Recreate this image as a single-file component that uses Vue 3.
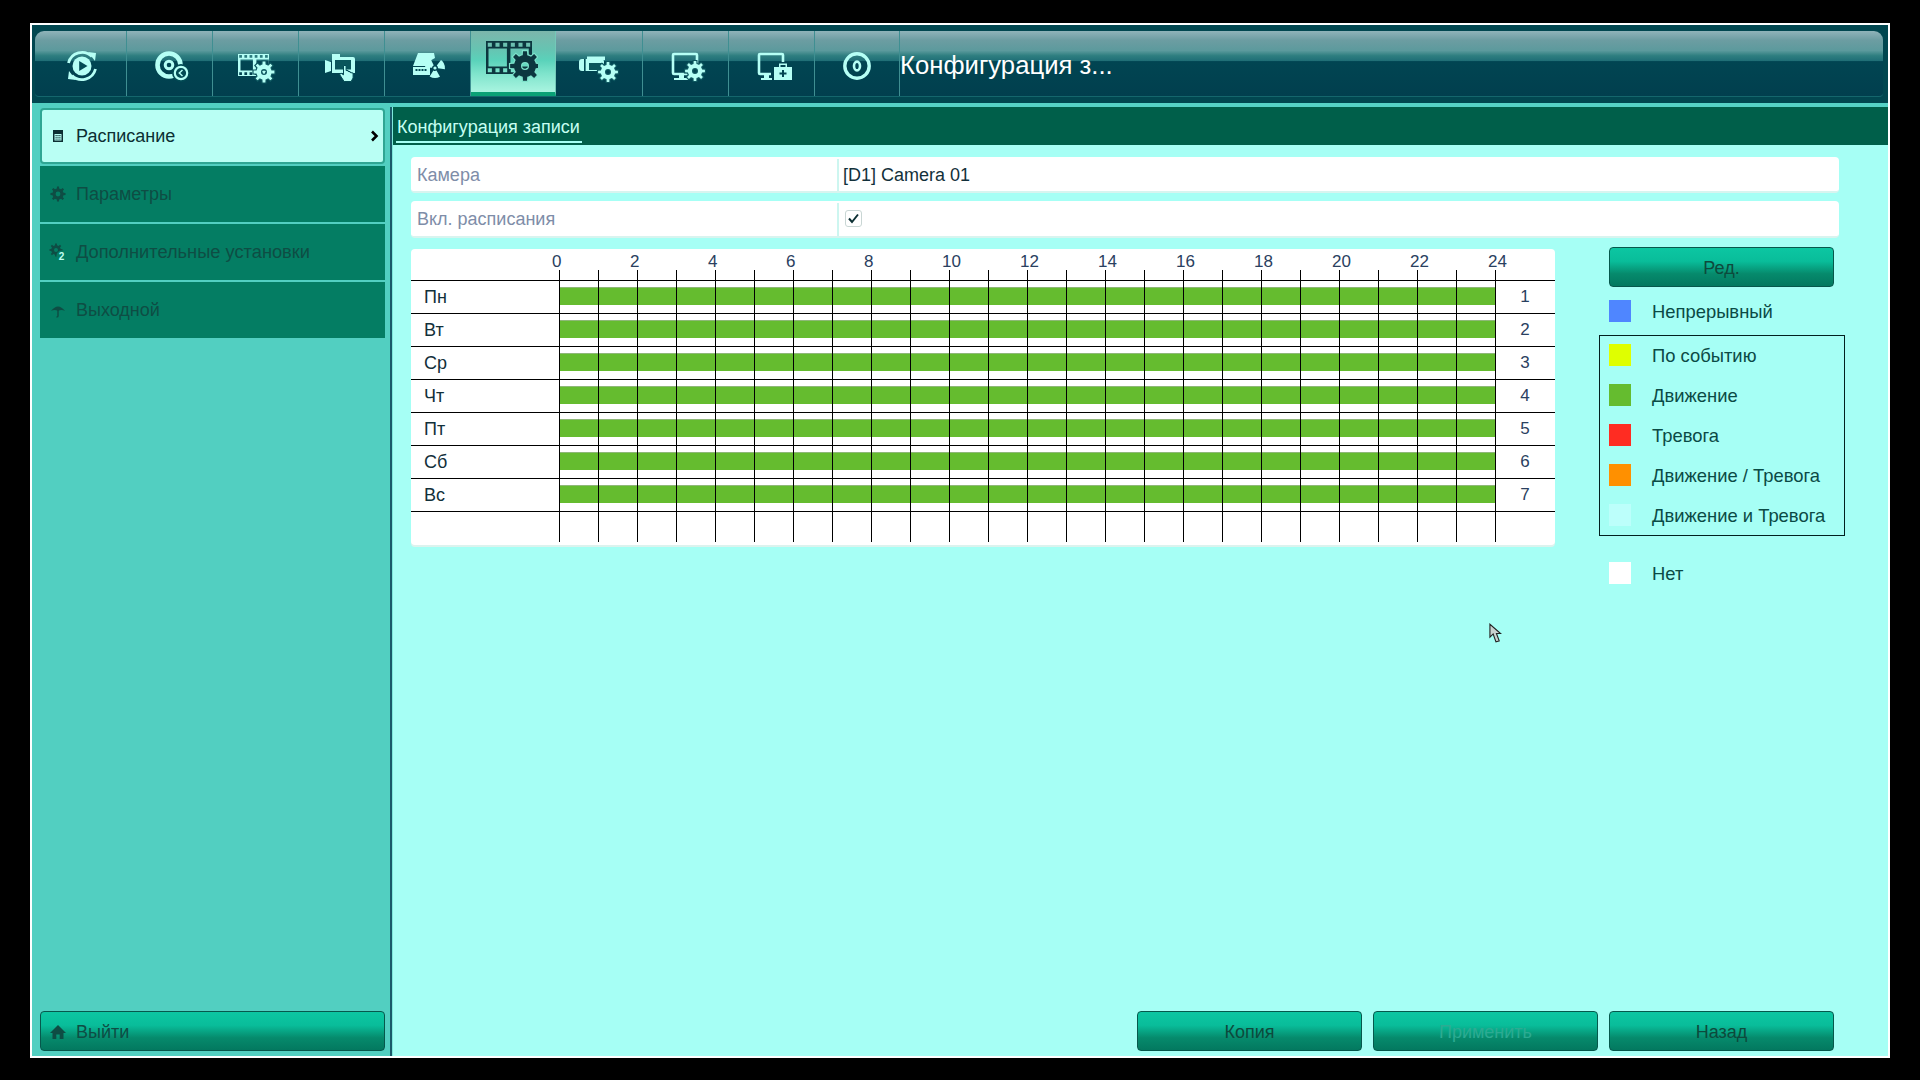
<script setup>
const days = [
  { name: 'Пн', num: 1 },
  { name: 'Вт', num: 2 },
  { name: 'Ср', num: 3 },
  { name: 'Чт', num: 4 },
  { name: 'Пт', num: 5 },
  { name: 'Сб', num: 6 },
  { name: 'Вс', num: 7 }
]
const hours = [0, 2, 4, 6, 8, 10, 12, 14, 16, 18, 20, 22, 24]
const lines = Array.from({ length: 25 }, (_, i) => i)

const boxed = [
  { name: 'По событию', color: '#dfff00' },
  { name: 'Движение', color: '#65bc2f' },
  { name: 'Тревога', color: '#ff2c22' },
  { name: 'Движение / Тревога', color: '#ff9000' },
  { name: 'Движение и Тревога', color: '#bcfffb' }
]

// gear outline with a round hole, used by several icons
function gear(cx, cy, R, r, hole, teeth = 8) {
  let d = ''
  const step = (Math.PI * 2) / teeth
  for (let i = 0; i < teeth; i++) {
    const a = i * step
    const w = step * 0.24
    const pts = [
      [r, a - step / 2 + w * 0.4],
      [r, a - w * 1.1],
      [R, a - w * 0.7],
      [R, a + w * 0.7],
      [r, a + w * 1.1]
    ]
    pts.forEach((p, j) => {
      const x = cx + p[0] * Math.cos(p[1])
      const y = cy + p[0] * Math.sin(p[1])
      d += (i === 0 && j === 0 ? 'M' : 'L') + x.toFixed(2) + ' ' + y.toFixed(2)
    })
  }
  d += `Z M${cx + hole} ${cy} A${hole} ${hole} 0 1 0 ${cx - hole} ${cy} A${hole} ${hole} 0 1 0 ${cx + hole} ${cy}Z`
  return d
}

// film strip with perforations and two frames cut out
function film(x, y, w, h, holes = 6) {
  const band = h * 0.2
  let d = `M${x} ${y}H${x + w}V${y + h}H${x}Z`
  const gap = w / holes
  const s = band * 0.62
  for (let i = 0; i < holes; i++) {
    const hx = x + gap * i + (gap - s) / 2
    d += `M${hx} ${y + band * 0.25}h${s}v${s}h${-s}Z`
    d += `M${hx} ${y + h - band * 0.25 - s}h${s}v${s}h${-s}Z`
  }
  const top = y + band + 1
  const hgt = h - 2 * band - 2
  const fw = w * 0.4
  d += `M${x + 2.5} ${top}h${fw}v${hgt}h${-fw}Z`
  d += `M${x + fw + 6} ${top}h${fw}v${hgt}h${-fw}Z`
  return d
}
</script>

<template>
  <div class="screen">
    <div class="frame">
      <header class="top">
        <div class="bar">
          <div class="tab first">
            <svg width="48" height="40" viewBox="0 0 48 40">
              <circle cx="25" cy="20" r="9.5" fill="currentColor" />
              <path d="M22.2 15 L30.5 20 L22.2 25Z" fill="#024a54" />
              <path d="M11.5 17 A14 14 0 0 1 35 10.5 M38.5 23 A14 14 0 0 1 15 29.5" fill="none" stroke="currentColor" stroke-width="2.8" />
              <path d="M31 6 L39 7 L38 15Z M19 34 L11 33 L12 25Z" fill="currentColor" />
            </svg>
          </div>
          <div class="tab">
            <svg width="48" height="40" viewBox="0 0 48 40">
              <circle cx="23" cy="19" r="11.5" fill="none" stroke="currentColor" stroke-width="4.6" />
              <circle cx="23" cy="19" r="3.8" fill="none" stroke="currentColor" stroke-width="3" />
              <circle cx="35" cy="27" r="9" fill="#024a54" />
              <circle cx="35" cy="27" r="6.2" fill="none" stroke="currentColor" stroke-width="2.2" />
              <path d="M36.5 24 L33.3 27 L36.5 30" fill="none" stroke="currentColor" stroke-width="1.5" />
            </svg>
          </div>
          <div class="tab nudge">
            <svg width="48" height="40" viewBox="0 0 48 40">
              <path :d="film(7, 8, 31, 22)" fill="currentColor" fill-rule="evenodd" />
              <path class="halo" :d="gear(33, 26, 10.5, 7.6, 3)" fill="currentColor" fill-rule="evenodd" />
            </svg>
          </div>
          <div class="tab nudge">
            <svg width="48" height="40" viewBox="0 0 48 40">
              <path d="M8 14 L14 16 V25 L8 27Z" fill="currentColor" />
              <path d="M15 8 H23 V11 H36 Q38 11 38 13 V27 H15Z" fill="currentColor" />
              <rect x="18" y="14" width="16" height="9.5" fill="#0a565c" />
              <path d="M26.5 19.5 h2.6 v5 h2 v1 h2 v1 l3 .5 v5 l-2 3.5 h-7 l-4.5 -7 l1.6 -1.2 l2.3 1.5Z" fill="currentColor" stroke="#024a54" stroke-width="1" />
            </svg>
          </div>
          <div class="tab nudge">
            <svg width="48" height="40" viewBox="0 0 48 40">
              <path d="M15 7 H31 L32 12 Q25 15 24 20 H10Z" fill="currentColor" />
              <rect x="10" y="21" width="17" height="8" fill="currentColor" />
              <path d="M12.5 24 h11" stroke="#024a54" stroke-width="2" stroke-dasharray="2 1" />
              <circle cx="32" cy="22" r="1.6" fill="currentColor" />
              <circle cx="32" cy="22" r="6.5" fill="none" stroke="currentColor" stroke-width="7" stroke-dasharray="6.8 6.8" transform="rotate(60 32 22)" />
            </svg>
          </div>
          <div class="tab on">
            <svg width="52" height="44" viewBox="0 0 52 44">
              <path :d="film(0, 1, 46, 33)" fill="currentColor" fill-rule="evenodd" />
              <path class="halo-on" :d="gear(39, 26, 15, 11, 4)" fill="currentColor" fill-rule="evenodd" />
            </svg>
          </div>
          <div class="tab after-on">
            <svg width="48" height="40" viewBox="0 0 48 40">
              <rect x="6" y="13" width="25" height="12" rx="3" fill="currentColor" />
              <rect x="11" y="13" width="1.6" height="12" fill="#024a54" />
              <rect x="14" y="10.5" width="18" height="3.6" fill="currentColor" />
              <path d="M16 17 H30 L33 24 H16Z" fill="#0a565c" />
              <path class="halo" :d="gear(35, 26, 10, 7.2, 3)" fill="currentColor" fill-rule="evenodd" />
            </svg>
          </div>
          <div class="tab">
            <svg width="48" height="40" viewBox="0 0 48 40">
              <path d="M28 28 H12 Q11 28 11 27 V9 Q11 8 12 8 H34 Q35 8 35 9 V18" fill="none" stroke="currentColor" stroke-width="2.6" />
              <path d="M17 28 H22 V32 H26 V34 H12 V32 H17Z" fill="currentColor" />
              <path class="halo" :d="gear(33, 25, 10, 7.2, 3)" fill="currentColor" fill-rule="evenodd" />
            </svg>
          </div>
          <div class="tab">
            <svg width="48" height="40" viewBox="0 0 48 40">
              <path d="M23 28 H12 Q11 28 11 27 V9 Q11 8 12 8 H34 Q35 8 35 9 V16" fill="none" stroke="currentColor" stroke-width="2.6" />
              <path d="M16 28 H21 V32 H24 V34 H13 V32 H16Z" fill="currentColor" />
              <path d="M31 21 V17.5 H39 V21 H37.5 V19 H32.5 V21Z" fill="currentColor" />
              <path d="M26 21 H44 V34 H26Z M34 24 V26.5 H31.5 V28.5 H34 V31 H36 V28.5 H38.5 V26.5 H36 V24Z" fill="currentColor" fill-rule="evenodd" />
            </svg>
          </div>
          <div class="tab last">
            <svg width="48" height="40" viewBox="0 0 48 40">
              <circle cx="24" cy="20" r="12.2" fill="none" stroke="currentColor" stroke-width="3.4" />
              <ellipse cx="24" cy="20" rx="3" ry="4.4" fill="none" stroke="currentColor" stroke-width="2.6" />
            </svg>
          </div>
          <span class="title">Конфигурация з...</span>
        </div>
      </header>

      <div class="body">
        <aside class="side">
          <div class="item active">
            <svg class="ico" width="18" height="18" viewBox="0 0 18 18">
              <path d="M4 3 H14 V15 H4Z M5.5 7 V13.5 H12.5 V7Z" fill="currentColor" fill-rule="evenodd" />
              <path d="M6.5 8.5 h5 M6.5 10.3 h5 M6.5 12.1 h5" stroke="currentColor" stroke-width="1" stroke-dasharray="1.2 .7" />
            </svg>
            <span>Расписание</span>
            <svg class="more" width="10" height="12" viewBox="0 0 10 12">
              <path d="M2 1.5 L6.5 6 L2 10.5" fill="none" stroke="#000" stroke-width="2.6" />
            </svg>
          </div>
          <div class="item">
            <svg class="ico" width="18" height="18" viewBox="0 0 18 18">
              <path :d="gear(9, 9, 7.6, 5.6, 2.4)" fill="currentColor" fill-rule="evenodd" />
            </svg>
            <span>Параметры</span>
          </div>
          <div class="item">
            <svg class="ico" width="18" height="18" viewBox="0 0 18 18">
              <path :d="gear(7, 7, 6.6, 4.8, 2)" fill="currentColor" fill-rule="evenodd" />
              <circle cx="12.5" cy="12.5" r="5" fill="#047d63" />
              <text x="12.5" y="16.5" text-anchor="middle" class="two">2</text>
            </svg>
            <span class="long">Дополнительные установки</span>
          </div>
          <div class="item">
            <svg class="ico" width="18" height="18" viewBox="0 0 18 18">
              <path d="M2 10 Q9 1 16 10 Q12.5 8 9 10 Q5.5 8 2 10Z" fill="currentColor" />
              <path d="M9 8 V15 Q9 16 7.5 16" fill="none" stroke="currentColor" stroke-width="1.5" />
            </svg>
            <span>Выходной</span>
          </div>
          <div class="item exit">
            <svg class="ico" width="18" height="18" viewBox="0 0 18 18">
              <path d="M9 2 L17 10 H14.5 V16 H10.7 V11.5 H7.3 V16 H3.5 V10 H1Z" fill="currentColor" />
            </svg>
            <span>Выйти</span>
          </div>
        </aside>

        <main class="main">
          <div class="main-head">
            <span class="main-tab">Конфигурация записи</span>
          </div>

          <div class="content">
            <div class="row r1">
              <div class="row-label">Камера</div>
              <div class="row-value">[D1] Camera 01</div>
            </div>
            <div class="row r2">
              <div class="row-label">Вкл. расписания</div>
              <div class="row-value">
                <span class="check">
                  <svg width="13" height="13" viewBox="0 0 13 13">
                    <path d="M2 6.5 L5 10 L11 2.5" fill="none" stroke="#0c2f33" stroke-width="2" />
                  </svg>
                </span>
              </div>
            </div>

            <div class="lower">
              <div class="schedule">
                <div class="hours">
                  <span v-for="h in hours" :key="h" class="hour">{{ h }}</span>
                </div>
                <div v-for="d in days" :key="d.num" class="day">
                  <span class="day-name">{{ d.name }}</span>
                  <div class="track"><div class="fill"></div></div>
                  <span class="day-num">{{ d.num }}</span>
                </div>
                <div class="day empty"></div>
                <div class="ticks">
                  <i v-for="l in lines" :key="l"></i>
                </div>
              </div>

              <div class="legend">
                <button class="btn edit">Ред.</button>
                <div class="leg out first-out">
                  <span class="sw" style="background: #4f86ff"></span>
                  <span>Непрерывный</span>
                </div>
                <div class="box">
                  <div v-for="b in boxed" :key="b.name" class="leg">
                    <span class="sw" :style="{ background: b.color }"></span>
                    <span>{{ b.name }}</span>
                  </div>
                </div>
                <div class="leg out last-out">
                  <span class="sw" style="background: #fff"></span>
                  <span>Нет</span>
                </div>
              </div>
            </div>

            <div class="actions">
              <button class="btn">Копия</button>
              <button class="btn off">Применить</button>
              <button class="btn">Назад</button>
            </div>
          </div>

          <svg class="cursor" width="13" height="21" viewBox="0 0 14 22">
            <path d="M1 1 L1 15 L4.5 11.5 L7.5 20 L11 19 L8 11 L12.5 11Z" fill="#c9d2d0" stroke="#222" stroke-width="1.2" />
          </svg>
        </main>
      </div>
    </div>
  </div>
</template>

<style>
html,
body {
  margin: 0;
  background: #000;
}
</style>

<style scoped>
.screen {
  width: 1920px;
  height: 1080px;
  box-sizing: border-box;
  padding: 23px 30px 22px 30px;
  background: #000;
  font-family: "Liberation Sans", Arial, sans-serif;
}

.frame {
  height: 100%;
  box-sizing: border-box;
  border: 2px solid #fff;
  display: flex;
  flex-direction: column;
  background: #52cfc1;
}

.top {
  height: 78px;
  box-sizing: border-box;
  padding: 6px 5px 6px 3px;
  background: #014750;
  flex: none;
}

.bar {
  height: 66px;
  box-sizing: border-box;
  display: flex;
  border-radius: 9px 9px 4px 4px;
  border-bottom: 1px solid #14666c;
  background: linear-gradient(#8fb3b9 0, #6c9da2 14%, #5c9a9d 30%, #2e7e80 38%, #1f6e76 46%, #014552 47%, #013f4e 100%);
  color: #b6fff5;
}

.tab {
  width: 86px;
  height: 65px;
  flex: none;
  box-sizing: border-box;
  padding-top: 5px;
  display: flex;
  justify-content: center;
  align-items: center;
  border-right: 1px solid #3f8f92;
}

.tab.first {
  width: 92px;
}

.tab.last {
  width: 85px;
}

.tab.nudge svg {
  margin-left: -2px;
}

.tab.on {
  width: 85px;
  color: #0c373f;
  border-right-color: #74c8b8;
  border-bottom: 4px solid #0aa176;
  padding-top: 0;
  background: linear-gradient(#7cb6ab 0, #66c4b2 30%, #5ad2ba 48%, #7fe4cc 70%, #a9f4e0 100%);
}

.tab.on svg {
  margin-left: -2px;
}

.tab.after-on {
  width: 87px;
}

.tab.after-on svg {
  margin-left: -5px;
}

.title {
  align-self: center;
  padding-top: 4px;
  color: #fff;
  font-size: 25.7px;
}

.halo {
  stroke: #0e5860;
  stroke-width: 2.4;
  paint-order: stroke;
}

.halo-on {
  stroke: #7fe2cb;
  stroke-width: 2.4;
  paint-order: stroke;
}

.body {
  flex: 1;
  display: flex;
  min-height: 0;
  padding-top: 4px;
  background: #56d2c6;
}

.side {
  width: 358px;
  flex: none;
  box-sizing: border-box;
  margin-top: -4px;
  padding: 5px 5px 5px 8px;
  background: #52cfc1;
  display: flex;
  flex-direction: column;
  gap: 2px;
}

.item {
  height: 56px;
  flex: none;
  box-sizing: border-box;
  padding-left: 9px;
  display: flex;
  align-items: center;
  background: #047d63;
  color: #0e4d44;
  font-size: 18px;
}

.item .ico {
  flex: none;
  margin-right: 9px;
}

.item span {
  white-space: nowrap;
}

.item .long {
  font-size: 18.25px;
}

.item.active {
  background: #b9fff4;
  border: 2px solid #2fa693;
  border-radius: 4px;
  padding-left: 7px;
  color: #0c2f33;
}

.more {
  margin-left: auto;
  margin-right: 3px;
}

.item.exit {
  height: 40px;
  margin-top: auto;
  border: 1px solid #06584c;
  border-radius: 4px;
  padding: 2px 0 0 8px;
  background: linear-gradient(#0cc6a2 0, #09bd9a 35%, #068a6c 68%, #03785f 100%);
}

.two {
  font-family: "Liberation Sans", Arial, sans-serif;
  font-size: 10px;
  font-weight: 700;
  fill: #c0fff2;
}

.main {
  position: relative;
  flex: 1;
  border-left: 2px solid #1a5a6a;
  box-shadow: inset 1px 0 0 #7fe8dc;
  background: #a6fff5;
  display: flex;
  flex-direction: column;
  min-width: 0;
}

.main-head {
  height: 38px;
  flex: none;
  box-sizing: border-box;
  margin-left: 1px;
  padding-left: 3px;
  background: #005f4a;
}

.main-tab {
  display: inline-block;
  box-sizing: border-box;
  height: 36px;
  width: 186px;
  padding: 10px 0 0 1px;
  border-bottom: 2px solid #a6fff5;
  color: #c6fff2;
  font-size: 18px;
  white-space: nowrap;
}

.content {
  flex: 1;
  min-height: 0;
  padding: 12px 49px 5px 19px;
  display: flex;
  flex-direction: column;
}

.row {
  height: 37px;
  box-sizing: border-box;
  flex: none;
  display: flex;
  background: #fff;
  border-radius: 4px;
  border-bottom: 2px solid #d8f4ef;
  font-size: 18px;
  padding-top: 2px;
}

.row.r1 {
  height: 36px;
  margin-bottom: 8px;
}

.row-label {
  width: 428px;
  flex: none;
  box-sizing: border-box;
  padding-left: 6px;
  display: flex;
  align-items: center;
  border-right: 2px solid #cdf6f0;
  color: #7e8da8;
}

.row-value {
  flex: 1;
  padding-left: 4px;
  display: flex;
  align-items: center;
  color: #12303a;
}

.check {
  width: 17px;
  height: 17px;
  box-sizing: border-box;
  margin-left: 2px;
  margin-top: -3px;
  border: 1px solid #c9d6d4;
  border-radius: 3px;
  display: flex;
  align-items: center;
  justify-content: center;
}

.lower {
  display: flex;
  margin-top: 11px;
  align-items: flex-start;
}

.schedule {
  position: relative;
  width: 1144px;
  height: 296px;
  flex: none;
  background: #fff;
  border-radius: 4px;
  box-shadow: 0 2px 0 #dcf3ee;
}

.hours {
  height: 31px;
  box-sizing: border-box;
  padding-left: 141px;
  display: flex;
  color: #2a4060;
  font-size: 17px;
  line-height: 25px;
}

.hour {
  width: 78px;
  flex: none;
}

.day {
  height: 33px;
  box-sizing: border-box;
  border-top: 1.4px solid #000;
  display: flex;
  align-items: flex-start;
  font-size: 18px;
  color: #12303a;
}

.day-name {
  width: 148px;
  flex: none;
  box-sizing: border-box;
  padding-left: 13px;
  line-height: 32px;
}

.track {
  width: 936px;
  flex: none;
  padding-top: 7px;
}

.fill {
  height: 17px;
  background: #65bc2f;
  box-shadow: 0 -1px 0 #8fb878;
}

.day-num {
  flex: 1;
  text-align: center;
  line-height: 32px;
  font-size: 17px;
  color: #2a4060;
}

.ticks {
  position: absolute;
  left: 148px;
  top: 21px;
  bottom: 3px;
  display: flex;
}

.ticks i {
  display: block;
  width: 39px;
  flex: none;
  box-sizing: border-box;
  border-left: 1.4px solid #000;
}

.legend {
  margin-left: 44px;
  margin-right: -8px;
  margin-top: -2px;
  width: 246px;
  flex: none;
}

.btn {
  display: block;
  width: 225px;
  height: 40px;
  box-sizing: border-box;
  border: 1px solid #06584c;
  border-radius: 4px;
  padding: 2px 0 0;
  background: linear-gradient(#0cc6a2 0, #09bd9a 35%, #068a6c 68%, #03785f 100%);
  color: #0d4a3c;
  font-family: "Liberation Sans", Arial, sans-serif;
  font-size: 18px;
}

.btn.edit {
  margin-left: 10px;
}

.btn.off {
  color: #2cab92;
}

.leg {
  display: flex;
  align-items: center;
  gap: 21px;
  height: 22px;
  color: #0b4a45;
  font-size: 18.4px;
  white-space: nowrap;
}

.leg span + span {
  padding-top: 2px;
}

.leg + .leg {
  margin-top: 18px;
}

.leg.out {
  margin-left: 10px;
}

.first-out {
  margin-top: 13px;
}

.last-out {
  margin-top: 26px;
}

.sw {
  width: 22px;
  height: 22px;
  flex: none;
}

.box {
  margin-top: 13px;
  box-sizing: border-box;
  height: 201px;
  padding: 8px 0 0 9px;
  border: 1px solid #02201f;
}

.actions {
  margin-top: auto;
  margin-right: 5px;
  display: flex;
  justify-content: flex-end;
  gap: 11px;
}

.cursor {
  position: absolute;
  left: 1097px;
  top: 516px;
}
</style>
